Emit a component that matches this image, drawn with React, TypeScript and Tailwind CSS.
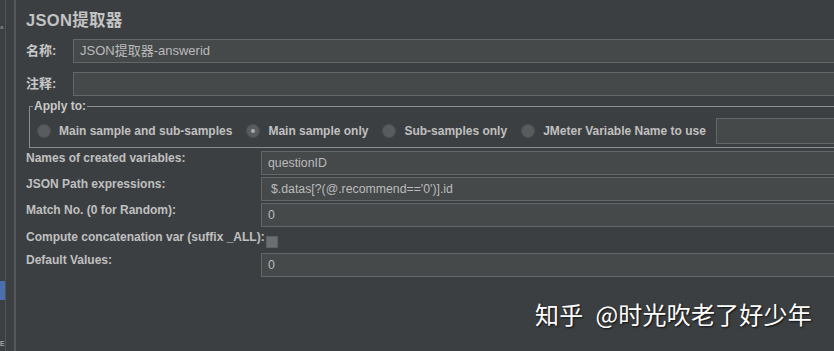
import React from 'react';

const FONT = { fontFamily: '"Liberation Sans", Arial, "Noto Sans CJK SC", sans-serif' };

// Radio options shown in the "Apply to:" group
const APPLY_OPTIONS = [
  { label: 'Main sample and sub-samples', checked: false },
  { label: 'Main sample only', checked: true },
  { label: 'Sub-samples only', checked: false },
  { label: 'JMeter Variable Name to use', checked: false },
];

const FIELDS = [
  { label: 'Names of created variables:', value: 'questionID', pad: 'pl-[6px]' },
  { label: 'JSON Path expressions:', value: "$.datas[?(@.recommend=='0')].id", pad: 'pl-[9px]' },
  { label: 'Match No. (0 for Random):', value: '0', pad: 'pl-[6px]' },
];

function TextBox({ value, className = '' }: { value?: string; className?: string }) {
  return (
    <div
      className={`h-[24px] flex items-center bg-[#45494a] border border-[#646769] border-r-0 text-[12.3px] text-[#bbbbbb] whitespace-nowrap ${className}`}
    >
      {value}
    </div>
  );
}

function Radio({ checked }: { checked: boolean }) {
  return (
    <span className="w-[14px] h-[14px] rounded-full bg-[#595c5e] border border-[#4e5153] flex items-center justify-center shrink-0">
      {checked && <span className="w-[4px] h-[4px] rounded-full bg-[#a9acae]" />}
    </span>
  );
}

export default function App() {
  return (
    <div className="w-[834px] h-[351px] bg-[#3c3f41] flex overflow-hidden relative" style={FONT}>
      {/* left tree panel edge */}
      <div className="w-[16px] h-full flex shrink-0 relative">
        <div className="w-[5px] h-full flex flex-col overflow-hidden">
          <span className="text-[6px] text-[#9a9a9a] leading-none mt-[24px]">a</span>
          <div className="mt-[251px] h-[19px] bg-[#4b6eaf]" />
          <span className="text-[7px] text-[#cccccc] leading-none mt-[40px]">E</span>
        </div>
        <div className="w-px h-full bg-[#515456]" />
        <div className="flex-1" />
        <div className="w-[2px] h-full bg-[#55585a]" />
      </div>

      {/* main panel */}
      <div className="flex-1 pl-[10px] flex flex-col min-w-0">
        <div className="h-[39px] pt-[8px]">
          <h1 className="text-[16.5px] font-bold leading-[24px] text-[#c3c3c3] tracking-[0.3px]">
            JSON提取器
          </h1>
        </div>

        <div className="flex items-center h-[24px]">
          <span className="w-[47px] text-[13px] font-bold text-[#c8c8c8]">名称:</span>
          <TextBox value="JSON提取器-answerid" className="flex-1 pl-[6px] text-[13px]" />
        </div>
        <div className="flex items-center h-[24px] mt-[9px]">
          <span className="w-[47px] text-[13px] font-bold text-[#c8c8c8]">注释:</span>
          <TextBox className="flex-1" />
        </div>

        {/* Apply to group */}
        <fieldset className="mt-[4px] ml-[3px] border border-[#8c8e90] border-r-0">
          <legend className="ml-[3px] px-[1px] text-[12px] font-bold leading-[13px] text-[#c8c8c8]">
            Apply to:
          </legend>
          <div className="flex items-center mt-[5px] mb-[3px] pl-[7px] h-[26px]">
            {APPLY_OPTIONS.map((opt) => (
              <div key={opt.label} className="flex items-center gap-[8px] mr-[14px]">
                <Radio checked={opt.checked} />
                <span className="text-[12px] font-bold text-[#c0c0c0] whitespace-nowrap">{opt.label}</span>
              </div>
            ))}
            <div className="flex-1 h-[26px] -ml-[4px] bg-[#45494a] border border-[#646769] border-r-0" />
          </div>
        </fieldset>

        <div className="flex flex-col gap-[2px] mt-[3px]">
          {FIELDS.map((f) => (
            <div key={f.label} className="flex items-start h-[24px]">
              <span className="w-[235px] shrink-0 text-[12px] font-bold leading-[14px] text-[#c0c0c0] whitespace-nowrap">
                {f.label}
              </span>
              <TextBox value={f.value} className={`flex-1 ${f.pad}`} />
            </div>
          ))}
          <div className="flex items-start h-[24px]">
            <span className="w-[235px] shrink-0 pt-[1px] text-[12px] font-bold leading-[14px] text-[#c0c0c0] whitespace-nowrap">
              Compute concatenation var (suffix _ALL):
            </span>
            <span className="mt-[7px] ml-[5px] w-[12px] h-[12px] bg-[#6b6e70] border border-[#5d6062]" />
          </div>
        </div>
        <div className="flex items-start h-[24px]">
          <span className="w-[235px] shrink-0 text-[12px] font-bold leading-[14px] text-[#c0c0c0]">
            Default Values:
          </span>
          <TextBox value="0" className="flex-1 pl-[6px]" />
        </div>
      </div>

      {/* watermark */}
      <div
        className="absolute left-[535px] top-[299px] text-[24px] leading-[30px] tracking-[0.2px] text-white whitespace-nowrap [text-shadow:1px_1px_2px_rgba(0,0,0,0.8)]"
        style={{ fontFamily: '"Noto Sans CJK SC", "Liberation Sans", sans-serif' }}
      >
        知乎<span className="ml-[12px]">@时光吹老了好少年</span>
      </div>
    </div>
  );
}
